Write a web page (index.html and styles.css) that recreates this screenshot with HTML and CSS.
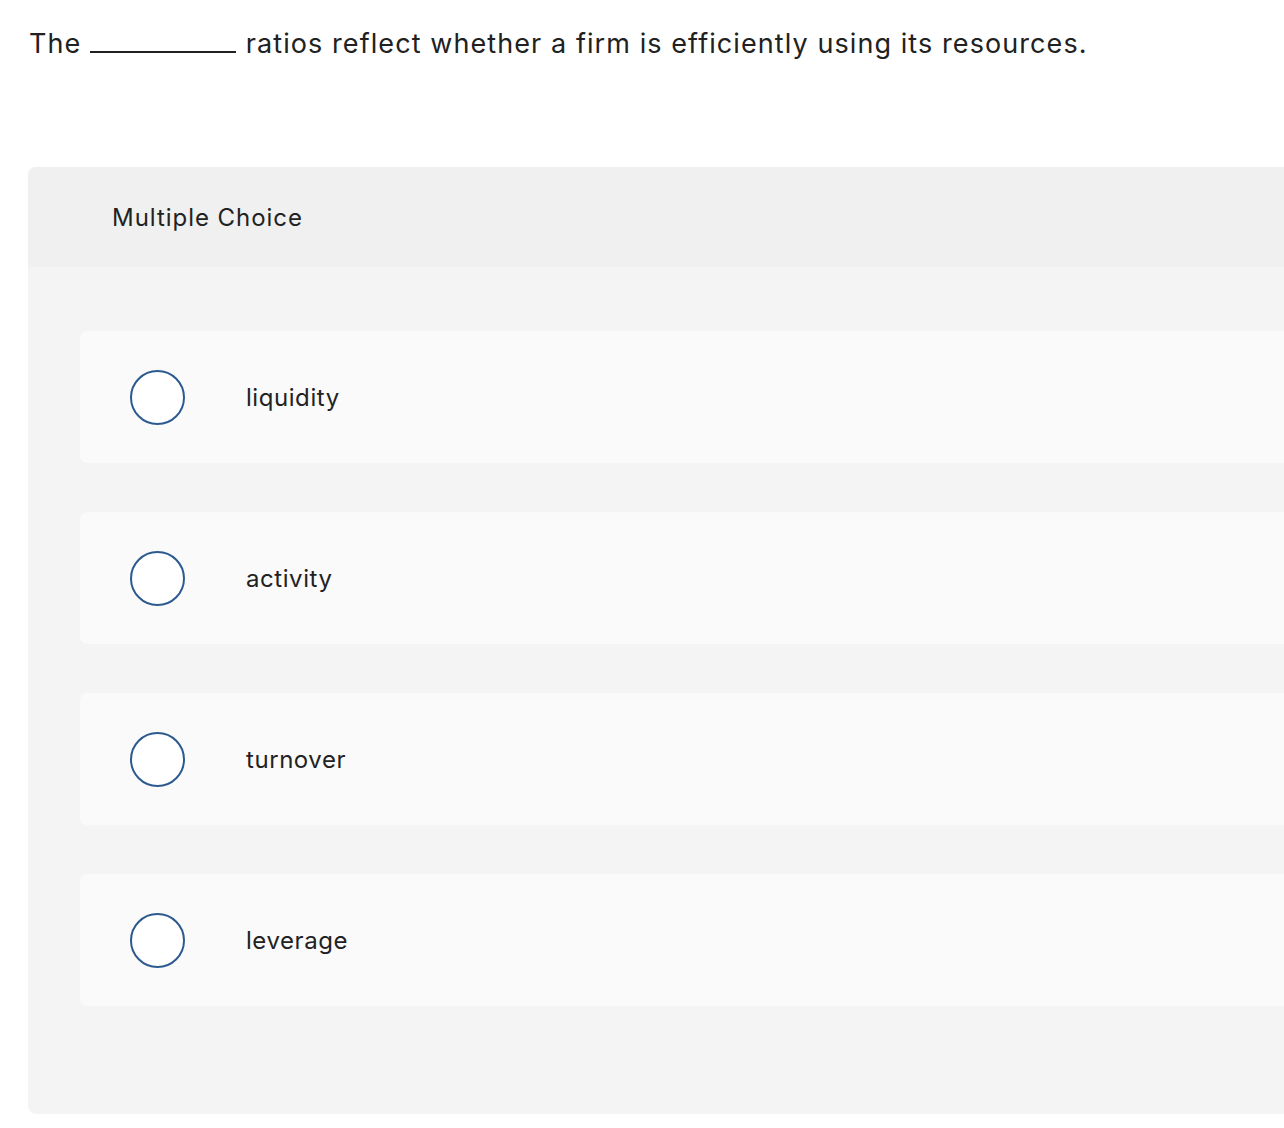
FILE: index.html
```html
<!DOCTYPE html>
<html lang="en">
<head>
    <meta charset="UTF-8">
    <meta name="viewport" content="width=device-width, initial-scale=1.0">
    <title>Multiple Choice</title>
    <link rel="stylesheet" href="styles.css">
</head>
<body>
    <p class="question">The <span class="blank"></span> ratios reflect whether a firm is efficiently using its resources.</p>

    <div class="card">
        <div class="card-header">Multiple Choice</div>
        <div class="card-body">
            <label class="option">
                <span class="radio"></span>
                <span class="option-text">liquidity</span>
            </label>
            <label class="option">
                <span class="radio"></span>
                <span class="option-text">activity</span>
            </label>
            <label class="option">
                <span class="radio"></span>
                <span class="option-text">turnover</span>
            </label>
            <label class="option">
                <span class="radio"></span>
                <span class="option-text">leverage</span>
            </label>
        </div>
    </div>
</body>
</html>
```

FILE: styles.css
```css
body {
    font-family: 'Inter', 'Open Sans', sans-serif;
    letter-spacing: 0.035em;
    margin: 0;
    padding: 0;
    overflow: hidden;
    background-color: #ffffff;
    color: #222222;
}

.question {
    margin: 0;
    padding: 25px 0 0 29px;
    font-size: 27px;
    line-height: 38px;
    letter-spacing: 0.04em;
    color: #212121;
}

.blank {
    display: inline-block;
    width: 146px;
    margin: 0 1px 0 0;
    border-bottom: 2px solid #212121;
    vertical-align: baseline;
}

.card {
    margin: 104px 0 0 28px;
    width: 1300px;
    border-radius: 8px;
    background-color: #f4f4f4;
    overflow: hidden;
}

.card-header {
    height: 100px;
    display: flex;
    align-items: center;
    padding-left: 84px;
    background-color: #f0f0f0;
    font-size: 24px;
    letter-spacing: 0.04em;
    color: #222222;
}

.card-body {
    display: flex;
    flex-direction: column;
    gap: 49px;
    padding: 64px 0 108px 52px;
}

.option {
    height: 132px;
    display: flex;
    align-items: center;
    padding-left: 50px;
    background-color: #fafafa;
    border-radius: 7px 0 0 7px;
}

.radio {
    width: 51px;
    height: 51px;
    border: 2px solid #2c5a8f;
    border-radius: 50%;
    background-color: #ffffff;
    flex-shrink: 0;
}

.option-text {
    margin-left: 61px;
    font-size: 24px;
    color: #222222;
}
```
